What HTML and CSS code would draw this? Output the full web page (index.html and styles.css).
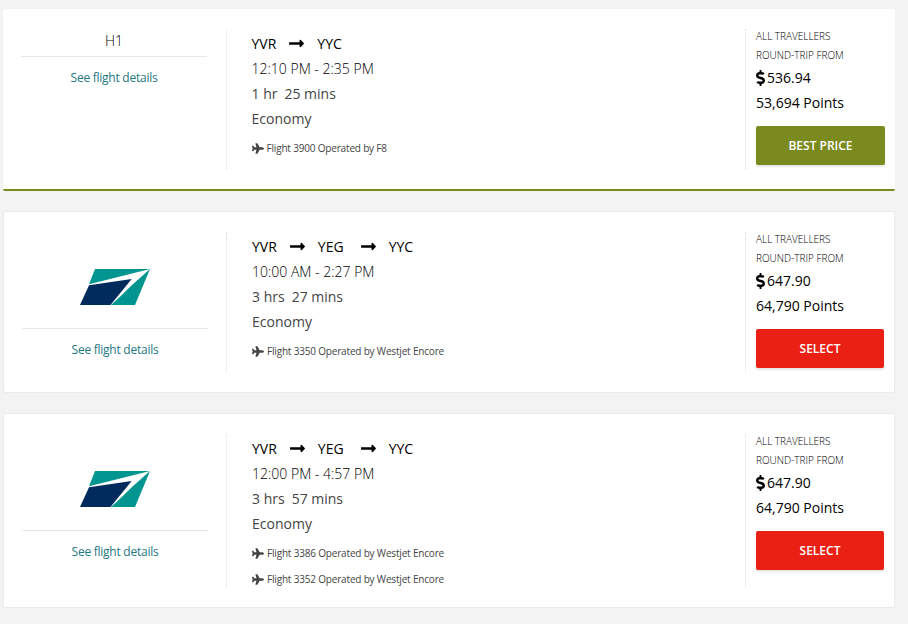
FILE: index.html
```html
<!DOCTYPE html>
<html lang="en">
<head>
    <meta charset="UTF-8">
    <meta name="viewport" content="width=device-width, initial-scale=1.0">
    <title>Flight Results</title>
    <link rel="stylesheet" href="styles.css">
</head>
<body>
    <!-- Shared icons -->
    <svg class="icon-defs" width="0" height="0">
        <symbol id="arrow" viewBox="0 0 448 512">
            <path d="M313.941 216H12c-6.627 0-12 5.373-12 12v56c0 6.627 5.373 12 12 12h301.941v46.059c0 21.382 25.851 32.09 40.971 16.971l86.059-86.059c9.373-9.373 9.373-24.569 0-33.941l-86.059-86.059c-15.119-15.119-40.971-4.411-40.971 16.971V216z"/>
        </symbol>
        <symbol id="plane" viewBox="0 0 576 512">
            <path d="M480 192H365.71L260.61 8.06A16.014 16.014 0 0 0 246.71 0h-65.5c-10.63 0-18.3 10.17-15.38 20.39L214.86 192H112l-43.2-57.6c-3.02-4.03-7.77-6.4-12.8-6.4H16.01C5.6 128-2.04 137.78.49 147.88L32 256 .49 364.12C-2.04 374.22 5.6 384 16.01 384H56c5.04 0 9.78-2.37 12.8-6.4L112 320h102.86l-49.03 171.6c-2.92 10.22 4.75 20.4 15.38 20.4h65.5c5.74 0 11.04-3.08 13.89-8.06L365.71 320H480c35.35 0 96-28.65 96-64s-60.65-64-96-64z"/>
        </symbol>
        <symbol id="dollar" viewBox="0 0 288 512">
            <path d="M209.2 233.4l-108-31.6C88.7 198.2 80 186.5 80 173.5c0-16.3 13.2-29.5 29.5-29.5h66.3c12.2 0 24.2 3.7 34.2 10.5 6.1 4.1 14.3 3.1 19.5-2l34.8-34c7.1-6.9 6.1-18.4-1.8-24.5C238 74.8 207.4 64.1 176 64V16c0-8.8-7.2-16-16-16h-32c-8.8 0-16 7.2-16 16v48h-2.5C45.8 64-5.4 118.7.5 183.6c4.2 46.1 39.4 83.6 83.8 96.6l102.5 30c12.5 3.7 21.2 15.3 21.2 28.3 0 16.3-13.2 29.5-29.5 29.5h-66.3C100 368 88 364.3 78 357.5c-6.1-4.1-14.3-3.1-19.5 2l-34.8 34c-7.1 6.9-6.1 18.4 1.8 24.5 24.5 19.2 55.1 29.9 86.5 30v48c0 8.8 7.2 16 16 16h32c8.8 0 16-7.2 16-16v-48.2c46.6-.9 90.3-28.6 105.7-72.7 21.5-61.6-14.6-124.8-72.5-141.7z"/>
        </symbol>
        <symbol id="westjet" viewBox="0 0 70 36">
            <path fill="#00958f" d="M15 0H70L9 15.3z"/>
            <path fill="#00958f" d="M70 0L55 36H31Q41 27 51.500 16.500z"/>
            <path fill="#002b5c" d="M9 16.300L51.700 10 30.500 36H0z"/>
        </symbol>
    </svg>

    <div class="results">
        <div class="flight-card best">
            <div class="airline">
                <div class="airline-code">H1</div>
                <a href="#" class="details-link">See flight details</a>
            </div>
            <div class="flight-info">
                <div class="route">
                    <span>YVR</span>
                    <svg class="arrow"><use href="#arrow"/></svg>
                    <span>YYC</span>
                </div>
                <div class="time">12:10 PM - 2:35 PM</div>
                <div class="duration"><span>1 hr</span><span>25 mins</span></div>
                <div class="cabin">Economy</div>
                <div class="operators">
                    <div class="operator"><svg class="plane"><use href="#plane"/></svg>Flight 3900 Operated by F8</div>
                </div>
            </div>
            <div class="price-box">
                <div class="price-label">All Travellers</div>
                <div class="price-label">Round-trip from</div>
                <div class="price"><svg class="dollar"><use href="#dollar"/></svg>536.94</div>
                <div class="points">53,694 Points</div>
                <button class="btn btn-best">Best Price</button>
            </div>
        </div>

        <div class="flight-card">
            <div class="airline">
                <div class="airline-logo"><svg class="logo"><use href="#westjet"/></svg></div>
                <a href="#" class="details-link">See flight details</a>
            </div>
            <div class="flight-info">
                <div class="route">
                    <span>YVR</span>
                    <svg class="arrow"><use href="#arrow"/></svg>
                    <span>YEG</span>
                    <svg class="arrow arrow-next"><use href="#arrow"/></svg>
                    <span>YYC</span>
                </div>
                <div class="time">10:00 AM - 2:27 PM</div>
                <div class="duration"><span>3 hrs</span><span>27 mins</span></div>
                <div class="cabin">Economy</div>
                <div class="operators">
                    <div class="operator"><svg class="plane"><use href="#plane"/></svg>Flight 3350 Operated by Westjet Encore</div>
                </div>
            </div>
            <div class="price-box">
                <div class="price-label">All Travellers</div>
                <div class="price-label">Round-trip from</div>
                <div class="price"><svg class="dollar"><use href="#dollar"/></svg>647.90</div>
                <div class="points">64,790 Points</div>
                <button class="btn">Select</button>
            </div>
        </div>

        <div class="flight-card">
            <div class="airline">
                <div class="airline-logo"><svg class="logo"><use href="#westjet"/></svg></div>
                <a href="#" class="details-link">See flight details</a>
            </div>
            <div class="flight-info">
                <div class="route">
                    <span>YVR</span>
                    <svg class="arrow"><use href="#arrow"/></svg>
                    <span>YEG</span>
                    <svg class="arrow arrow-next"><use href="#arrow"/></svg>
                    <span>YYC</span>
                </div>
                <div class="time">12:00 PM - 4:57 PM</div>
                <div class="duration"><span>3 hrs</span><span>57 mins</span></div>
                <div class="cabin">Economy</div>
                <div class="operators">
                    <div class="operator"><svg class="plane"><use href="#plane"/></svg>Flight 3386 Operated by Westjet Encore</div>
                    <div class="operator"><svg class="plane"><use href="#plane"/></svg>Flight 3352 Operated by Westjet Encore</div>
                </div>
            </div>
            <div class="price-box">
                <div class="price-label">All Travellers</div>
                <div class="price-label">Round-trip from</div>
                <div class="price"><svg class="dollar"><use href="#dollar"/></svg>647.90</div>
                <div class="points">64,790 Points</div>
                <button class="btn">Select</button>
            </div>
        </div>
    </div>
</body>
</html>
```
FILE: styles.css
```css
* {
    margin: 0;
    padding: 0;
    box-sizing: border-box;
    font-family: 'Open Sans', 'Noto Sans', sans-serif;
}

body {
    background: #f3f3f3;
    font-size: 14px;
    line-height: 25px;
    color: #000;
}

.icon-defs {
    display: block;
}

.results {
    display: flex;
    flex-direction: column;
    gap: 20px;
    width: 892px;
    margin: 9px 0 0 3px;
}

/* Flight card */
.flight-card {
    display: flex;
    background: #fff;
    border: 1px solid #ebebeb;
    border-radius: 2px;
    padding: 20px 10px 20px 18px;
}

.flight-card.best {
    border: none;
    border-bottom: 2px solid #7a8a1e;
}

/* Airline column */
.airline {
    width: 186px;
    text-align: center;
}

.airline-code {
    font-weight: 300;
    height: 28px;
    line-height: 23px;
    border-bottom: 1px solid #e8e8e8;
}

.airline-logo {
    height: 97px;
    padding-top: 37px;
    border-bottom: 1px solid #e8e8e8;
}

.logo {
    display: block;
    width: 70px;
    height: 36px;
    margin: 0 auto;
}

.details-link {
    display: block;
    margin-top: 8px;
    font-size: 12px;
    letter-spacing: -0.25px;
    color: #24787f;
    text-decoration: none;
}

/* Flight info column */
.flight-info {
    flex: 1;
    margin-left: 18px;
    padding: 2px 0 0 25px;
    border-left: 1px dotted #ddd;
    min-height: 140px;
}

.best .flight-info {
    margin: 1px 0 0 19px;
    padding: 1px 0 0 24.5px;
    min-height: 139px;
}

.route {
    display: flex;
    align-items: center;
}

.arrow {
    width: 15px;
    height: 17px;
    margin: 0 13px;
}

.arrow-next {
    margin-left: 17px;
}

.time {
    font-weight: 300;
}

.duration {
    display: flex;
    gap: 7px;
    color: #444;
}

.cabin {
    color: #444;
}

.operators {
    display: flex;
    flex-direction: column;
    gap: 11px;
    margin-top: 10px;
}

.operator {
    display: flex;
    align-items: center;
    gap: 3px;
    font-size: 10px;
    letter-spacing: -0.18px;
    line-height: 15px;
    color: #444;
}

.plane {
    width: 12px;
    height: 11px;
    fill: #444;
}

/* Price column */
.price-box {
    width: 139px;
    padding-left: 10px;
    border-left: 1px dotted #ddd;
}

.best .price-box {
    width: 140px;
}

.price-label {
    font-size: 10px;
    font-weight: 300;
    line-height: 19px;
    text-transform: uppercase;
}

.price-label:first-child {
    margin-top: -2px;
}

.price {
    display: flex;
    align-items: center;
    gap: 2px;
}

.dollar {
    width: 9px;
    height: 16px;
}

.btn {
    display: block;
    width: 100%;
    height: 39px;
    margin-top: 11px;
    background: #e92013;
    border: none;
    border-radius: 2px;
    box-shadow: 0 2px 2px rgba(0, 0, 0, 0.1);
    color: #fff;
    font-size: 12px;
    font-weight: 600;
    text-transform: uppercase;
    cursor: pointer;
}

.btn-best {
    background: #7a8a1e;
}
```
